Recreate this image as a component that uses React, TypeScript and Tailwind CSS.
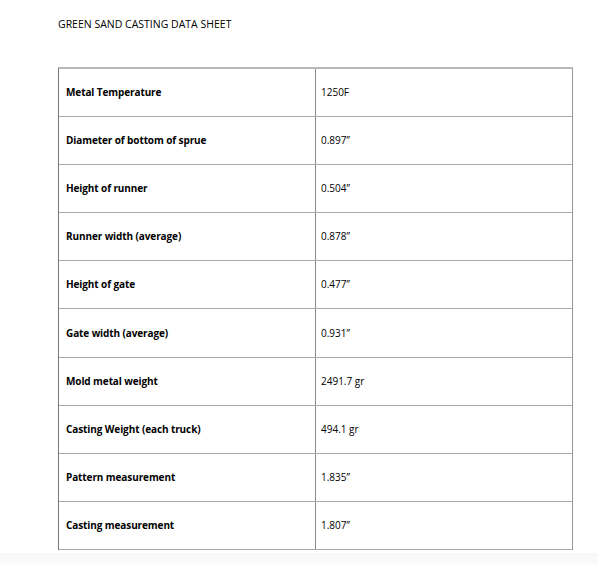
import React from "react";

const rows = [
  ["Metal Temperature", "1250F"],
  ["Diameter of bottom of sprue", "0.897\u201D"],
  ["Height of runner", "0.504\u201D"],
  ["Runner width (average)", "0.878\u201D"],
  ["Height of gate", "0.477\u201D"],
  ["Gate width (average)", "0.931\u201D"],
  ["Mold metal weight", "2491.7 gr"],
  ["Casting Weight (each truck)", "494.1 gr"],
  ["Pattern measurement", "1.835\u201D"],
  ["Casting measurement", "1.807\u201D"],
];

export default function App() {
  return (
    <div className="w-[598px] h-[564px] bg-white flex flex-col text-black" style={{ fontFamily: '"Open Sans", "Liberation Sans", sans-serif' }}>
      <div className="pl-[58px] pt-[17px] text-[10.5px] leading-[14px]">GREEN SAND CASTING DATA SHEET</div>
      <div className="mt-[36px] ml-[58px] w-[515px] border-t-2 border-t-[#b9b9b9] border-l border-l-[#777] border-r border-r-[#999]">
        {rows.map(([label, value], i) => (
          <div key={i} className="grid grid-cols-[257px_1fr] h-[48.1px] border-b border-[#a8a8a8]">
            <div className="flex items-center pl-[7px] font-bold text-[10px] tracking-[-0.1px] border-r border-[#8a8a8a]">{label}</div>
            <div className="flex items-center pl-[5px] text-[10px]">{value}</div>
          </div>
        ))}
      </div>
      <div className="flex-1 mt-[3px] bg-gradient-to-b from-[#f7f7f7] to-[#fbfbfb]" />
    </div>
  );
}
